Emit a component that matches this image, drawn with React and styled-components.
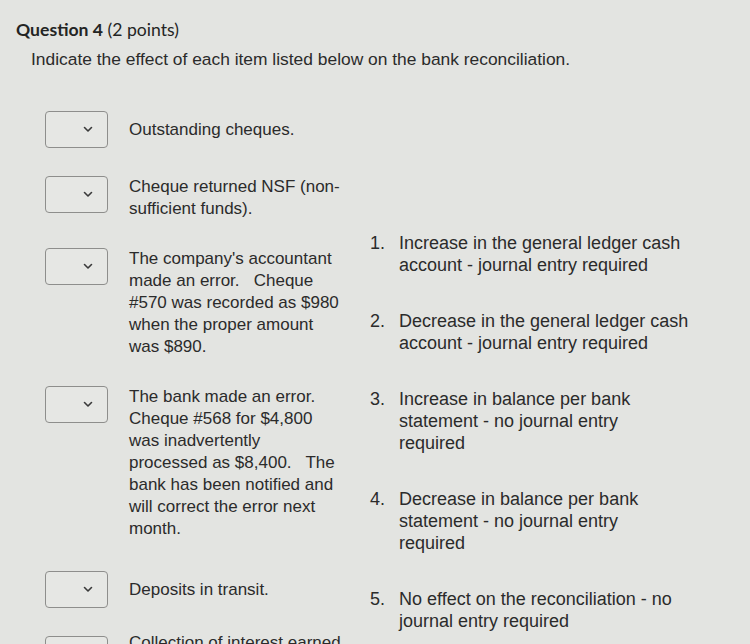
import React from "react";
import styled, { createGlobalStyle } from "styled-components";

const GlobalStyle = createGlobalStyle`
  html, body {
    margin: 0;
    padding: 0;
    overflow: hidden;
    background: #e3e4e1;
  }
  body {
    font-family: "Liberation Sans", Arial, sans-serif;
    color: #2b2b2b;
  }
`;

const Page = styled.div`
  height: 644px;
  box-sizing: border-box;
  padding-top: 19px;
  overflow: hidden;
`;

const Title = styled.h2`
  margin: 0 0 0 16px;
  font-family: Lato, "Open Sans", sans-serif;
  font-size: 17.6px;
  font-weight: 400;
  line-height: 22px;
  color: #242424;

  b {
    font-weight: 700;
  }
`;

const Prompt = styled.p`
  margin: 7px 0 0 31px;
  font-size: 17.4px;
  line-height: 22px;
`;

const Body = styled.div`
  display: flex;
  gap: 28px;
  margin-top: 41px;
  padding-left: 45px;
`;

const Matches = styled.div`
  display: flex;
  flex-direction: column;
  gap: 28px;
`;

const MatchRow = styled.div`
  display: flex;
  align-items: ${(p) => (p.$single ? "center" : "flex-start")};
  gap: 21px;
  margin-top: ${(p) => p.$push || 0}px;
`;

const Select = styled.div`
  flex-shrink: 0;
  width: 63px;
  height: 37px;
  box-sizing: border-box;
  display: flex;
  align-items: center;
  justify-content: flex-end;
  padding-right: 14px;
  border: 1px solid #8e8e8c;
  border-radius: 4px;
  background: #e6e7e4;
  color: #3a3a3a;
`;

const ItemText = styled.div`
  width: 213px;
  font-size: 17px;
  line-height: 22px;
`;

const Choices = styled.ol`
  list-style: none;
  margin: 0;
  padding: 121px 0 0;
  display: flex;
  flex-direction: column;
  gap: 34px;
`;

const Choice = styled.li`
  display: grid;
  grid-template-columns: 29px 289.6px;
  font-size: 18px;
  line-height: 22px;
`;

const items = [
  { text: "Outstanding cheques.", single: true },
  { text: "Cheque returned NSF (non-sufficient funds)." },
  {
    text:
      "The company's accountant made an error.\u00a0\u00a0 Cheque #570 was recorded as $980 when the proper amount was $890.",
  },
  {
    text:
      "The bank made an error. Cheque #568 for $4,800 was inadvertently processed as $8,400.\u00a0\u00a0 The bank has been notified and will correct the error next month.",
  },
  { text: "Deposits in transit.", single: true, push: 3 },
  { text: "Collection of interest earned by the bank.", single: true, push: -4 },
];

const choices = [
  "Increase in the general ledger cash account - journal entry required",
  "Decrease in the general ledger cash account - journal entry required",
  "Increase in balance per bank statement - no journal entry required",
  "Decrease in balance per bank statement - no journal entry required",
  "No effect on the reconciliation - no journal entry required",
];

function Chevron() {
  return (
    <svg width="10" height="7" viewBox="0 0 10 7" fill="none">
      <path
        d="M1.5 1.5L5 5l3.5-3.5"
        stroke="currentColor"
        strokeWidth="1.6"
        strokeLinecap="round"
        strokeLinejoin="round"
      />
    </svg>
  );
}

export default function App() {
  return (
    <Page>
      <GlobalStyle />
      <Title>
        <b>Question 4</b> (2 points)
      </Title>
      <Prompt>
        Indicate the effect of each item listed below on the bank reconciliation.
      </Prompt>
      <Body>
        <Matches>
          {items.map((item, i) => (
            <MatchRow key={i} $single={item.single} $push={item.push}>
              <Select>
                <Chevron />
              </Select>
              <ItemText>{item.text}</ItemText>
            </MatchRow>
          ))}
        </Matches>
        <Choices>
          {choices.map((c, i) => (
            <Choice key={i}>
              <span>{i + 1}.</span>
              <span>{c}</span>
            </Choice>
          ))}
        </Choices>
      </Body>
    </Page>
  );
}
